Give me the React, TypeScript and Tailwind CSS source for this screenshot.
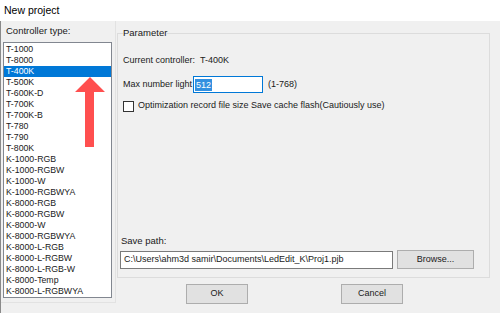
const controllers = [
  'T-1000',
  'T-8000',
  'T-400K',
  'T-500K',
  'T-600K-D',
  'T-700K',
  'T-700K-B',
  'T-780',
  'T-790',
  'T-800K',
  'K-1000-RGB',
  'K-1000-RGBW',
  'K-1000-W',
  'K-1000-RGBWYA',
  'K-8000-RGB',
  'K-8000-RGBW',
  'K-8000-W',
  'K-8000-RGBWYA',
  'K-8000-L-RGB',
  'K-8000-L-RGBW',
  'K-8000-L-RGB-W',
  'K-8000-Temp',
  'K-8000-L-RGBWYA',
]

const selected = 'T-400K'

export default function App() {
  return (
    <div
      className="w-[500px] h-[313px] overflow-hidden bg-[#f0f0f0] text-[#1a1a1a] text-[9px] flex flex-col"
      style={{ fontFamily: '"Liberation Sans", Arial, sans-serif' }}
    >
      {/* Title bar */}
      <div className="h-[21px] bg-white flex items-center pl-[4px] text-[10.5px] text-black shrink-0">
        New project
      </div>

      <div className="flex-1 flex border-l border-[#8a8a8a]">
        {/* Left column */}
        <div className="w-[115px] h-[282px] pl-[2px] border-r border-b border-[#e2e2e2] flex flex-col shrink-0">
          <div className="h-[21px] flex items-center pl-[3px] text-[9.5px]">Controller type:</div>
          <div className="w-[109px] h-[256px] bg-white border border-[#828790] pt-[1px] relative">
            {controllers.map((c) => (
              <div
                key={c}
                className={
                  'h-[11px] leading-[11px] pl-[2px] text-[8.75px] ' +
                  (c === selected ? 'bg-[#0078d7] text-white' : '')
                }
              >
                {c}
              </div>
            ))}
            {/* red arrow annotation */}
            <svg
              className="absolute left-[68px] top-[33px]"
              width="36"
              height="73"
              viewBox="0 0 36 73"
            >
              <polygon points="18,1 33,16 22,16 22,71 13,71 13,16 3,16" fill="#ff4f4f" />
            </svg>
          </div>
        </div>

        {/* Right column */}
        <div className="flex-1 flex flex-col pl-[1px]">
          <fieldset className="w-[373px] h-[251px] border border-[#dcdcdc] mt-[6px] pl-[5px] pr-[4px]">
            <legend className="text-[9.5px] leading-[12px]">Parameter</legend>
            <div className="h-[237px] flex flex-col">
              <div className="mt-[16px] h-[12px] flex items-center gap-[5px]">
                <span>Current controller:</span>
                <span>T-400K</span>
              </div>
              <div className="mt-[9px] h-[17px] flex items-center">
                <span>Max number light</span>
                <div className="ml-[1px] w-[70px] h-[17px] bg-white border border-[#0078d7] flex items-center pl-[1px]">
                  <span className="bg-[#3390e0] text-white px-[1px] leading-[12px]">512</span>
                </div>
                <span className="ml-[5px]">(1-768)</span>
              </div>
              <div className="mt-[7px] h-[12px] flex items-center">
                <div className="w-[11px] h-[11px] bg-white border border-[#333333]" />
                <span className="ml-[4px]">Optimization record file size Save cache flash(Cautiously use)</span>
              </div>
              <div className="flex-1" />
              <div className="h-[12px] flex items-center text-[9.5px] -ml-[2px]">Save path:</div>
              <div className="mt-[3px] mb-[7px] flex items-center -ml-[3px]">
                <div className="w-[273px] h-[18px] bg-white border border-[#7a7a7a] flex items-center pl-[3px]">
                  C:\Users\ahm3d samir\Documents\LedEdit_K\Proj1.pjb
                </div>
                <button className="ml-[4px] w-[77px] h-[19px] bg-[#e1e1e1] border border-[#adadad] flex items-center justify-center">
                  Browse...
                </button>
              </div>
            </div>
          </fieldset>

          <div className="flex mt-[6px] pl-[69px]">
            <button className="w-[62px] h-[20px] bg-[#e1e1e1] border border-[#adadad] flex items-center justify-center">
              OK
            </button>
            <button className="ml-[93px] w-[62px] h-[20px] bg-[#e1e1e1] border border-[#adadad] flex items-center justify-center">
              Cancel
            </button>
          </div>
        </div>
      </div>
    </div>
  )
}
